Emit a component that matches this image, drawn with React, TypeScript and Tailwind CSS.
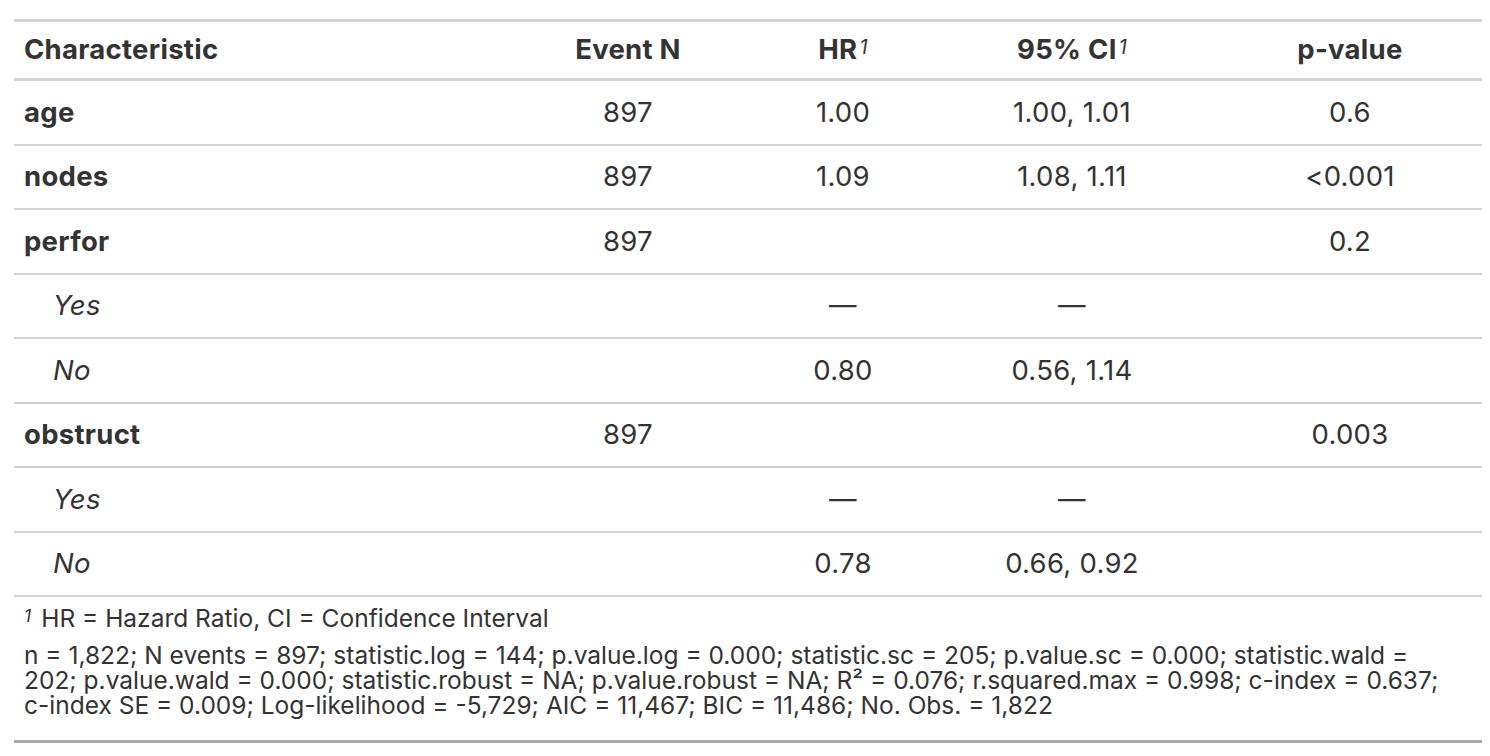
import React from "react";

type Row = {
  label: string;
  level: "var" | "sub";
  n?: string;
  hr?: string;
  ci?: string;
  p?: string;
};

const rows: Row[] = [
  { label: "age", level: "var", n: "897", hr: "1.00", ci: "1.00, 1.01", p: "0.6" },
  { label: "nodes", level: "var", n: "897", hr: "1.09", ci: "1.08, 1.11", p: "<0.001" },
  { label: "perfor", level: "var", n: "897", p: "0.2" },
  { label: "Yes", level: "sub", hr: "—", ci: "—" },
  { label: "No", level: "sub", hr: "0.80", ci: "0.56, 1.14" },
  { label: "obstruct", level: "var", n: "897", p: "0.003" },
  { label: "Yes", level: "sub", hr: "—", ci: "—" },
  { label: "No", level: "sub", hr: "0.78", ci: "0.66, 0.92" },
];

const cols = "grid grid-cols-[482px_264px_166px_292px_264px] items-center";

const Mark = () => (
  <sup className="italic font-normal text-[0.72em] leading-none relative -top-[0.25em] ml-[2px]">1</sup>
);

export default function App() {
  return (
    <div className="bg-white min-h-screen pt-[19px] px-[14px] font-['Inter',_sans-serif] text-[#333333]">
      <div className="w-[1468px] border-t-[3px] border-[#d3d3d3]">
        {/* column labels */}
        <div
          className={`${cols} h-[59px] border-b-[3px] border-[#d3d3d3] text-[27.5px] font-bold tracking-[0.01em]`}
        >
          <div className="pl-[10px]">Characteristic</div>
          <div className="text-center">Event N</div>
          <div className="text-center">
            HR
            <Mark />
          </div>
          <div className="text-center">
            95% CI
            <Mark />
          </div>
          <div className="text-center">p-value</div>
        </div>

        {/* body */}
        {rows.map((r, i) => (
          <div
            key={i}
            className={`${cols} h-[64.5px] border-b-2 border-[#d3d3d3] text-[27.5px] tracking-[0.01em]`}
          >
            <div className={r.level === "var" ? "pl-[10px] font-bold" : "pl-[39px] italic"}>{r.label}</div>
            <div className="text-center">{r.n}</div>
            <div className="text-center">{r.hr}</div>
            <div className="text-center">{r.ci}</div>
            <div className="text-center">{r.p}</div>
          </div>
        ))}

        {/* footnotes + source note */}
        <div className="border-b-[3px] border-[#a8a8a8] text-[24.5px] px-[10px] whitespace-nowrap">
          <div className="pt-[8px] pb-[8px] leading-[26px]">
            <sup className="italic text-[0.72em] leading-none relative -top-[0.3em] mr-[10px]">1</sup>
            HR = Hazard Ratio, CI = Confidence Interval
          </div>
          <div className="pt-[4px] pb-[22px] leading-[25px]">
            n = 1,822; N events = 897; statistic.log = 144; p.value.log = 0.000; statistic.sc = 205; p.value.sc = 0.000;
            statistic.wald =
            <br />
            202; p.value.wald = 0.000; statistic.robust = NA; p.value.robust = NA; R² = 0.076; r.squared.max = 0.998;
            c-index = 0.637;
            <br />
            c-index SE = 0.009; Log-likelihood = -5,729; AIC = 11,467; BIC = 11,486; No. Obs. = 1,822
          </div>
        </div>
      </div>
    </div>
  );
}
